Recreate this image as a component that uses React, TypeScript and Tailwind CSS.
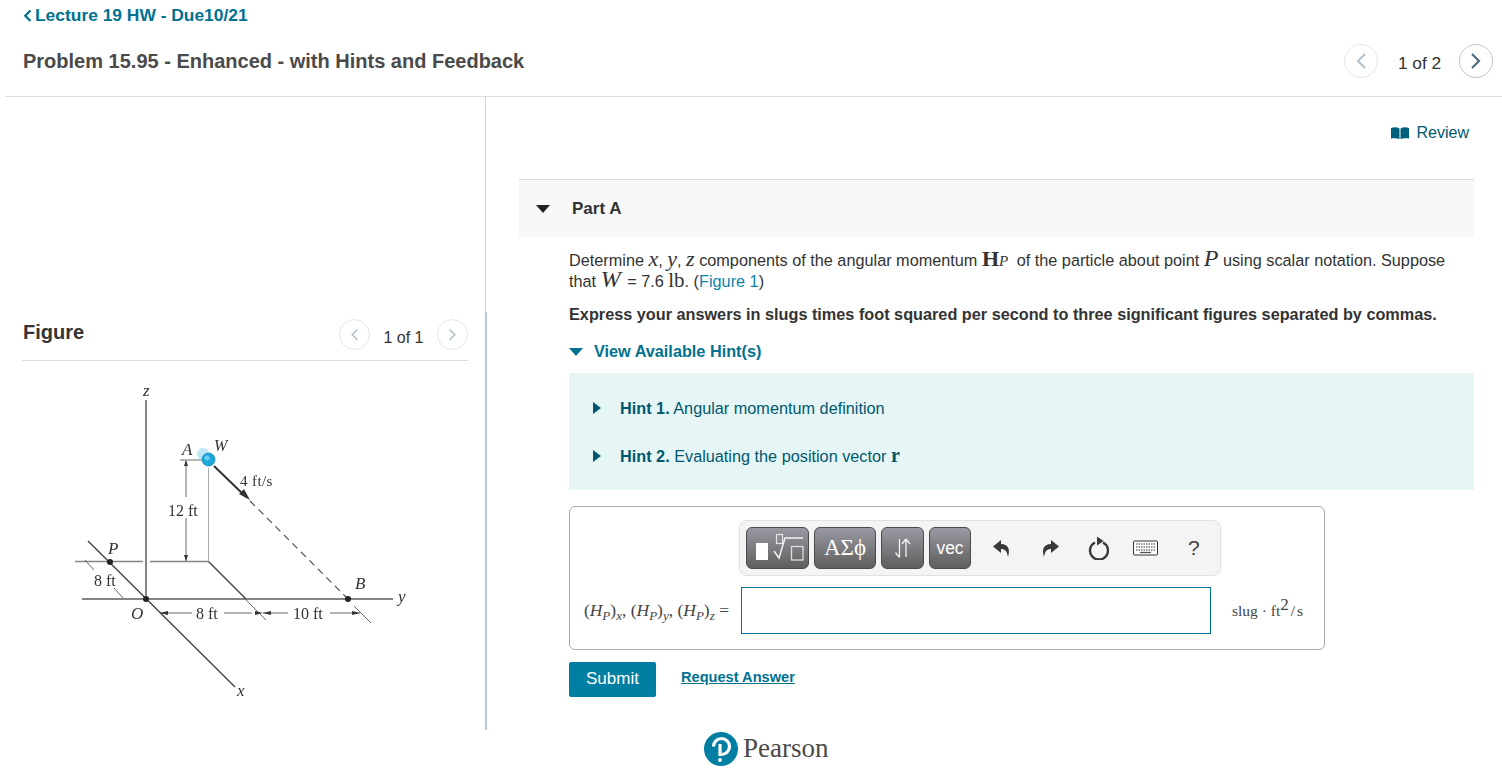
import React from "react";

const M = ({ children }: { children: React.ReactNode }) => (
  <span className="font-['Liberation_Serif',serif] italic text-[22px] leading-[0] text-[#333]">{children}</span>
);
const L = ({ children, cls }: { children: React.ReactNode; cls: string }) => (
  <span className={`font-['Liberation_Serif',serif] leading-[0] text-[#333] ${cls}`}>{children}</span>
);

const Chevron = ({ dir, color, size = 12, w = 2.2 }: { dir: "l" | "r"; color: string; size?: number; w?: number }) => (
  <svg width={size} height={size * 1.5} viewBox="0 0 12 18" fill="none">
    <path d={dir === "l" ? "M10 2 L3 9 L10 16" : "M2 2 L9 9 L2 16"} stroke={color} strokeWidth={w} />
  </svg>
);

const Figure = () => (
  <svg width="485" height="340" viewBox="0 370 485 340" className="block blur-[0.4px]" fontFamily="Liberation Serif, serif" fill="#333">
    <g stroke="#858585" fill="none">
      <path d="M146 400V598" strokeWidth="2" />
      <path d="M82 599H393" strokeWidth="2" />
      <path d="M75 561.5H143M150 561.5H208.5" strokeWidth="1.5" />
      <path d="M208.5 468V561.5" strokeWidth="1" stroke="#aaa" />
    </g>
    <g stroke="#444" fill="none">
      <path d="M88 541L235 687" strokeWidth="1.4" />
      <path d="M208.5 561.5L246 599" strokeWidth="1.4" />
      <path d="M214 466L246 497" strokeWidth="2" stroke="#333" />
      <path d="M250 501L348 599" strokeWidth="1.1" strokeDasharray="7 5" />
      <path d="M180 460H204" strokeWidth="0.8" />
      <path d="M186 461V497M186 518V561" strokeWidth="0.8" />
      <path d="M160 613H192M224 613H252M263 613H288M330 613H360" strokeWidth="0.8" />
      <path d="M246 600L266 620M354 606L371 623" strokeWidth="0.8" />
      <path d="M85 560L94 570M114 588L123 598" strokeWidth="0.8" />
    </g>
    <g fill="#333" stroke="none">
      <path d="M186 460L184 466H188Z" />
      <path d="M186 561L184 555H188Z" />
      <path d="M250 500L239 494L244 489Z" />
      <path d="M160 613L168 611V615Z" />
      <path d="M263 613L255 611V615Z" />
      <path d="M263 613L271 611V615Z" />
      <path d="M360 613L352 611V615Z" />
      <circle cx="146" cy="599" r="3" fill="#222" />
      <circle cx="110" cy="562" r="3" fill="#222" />
      <circle cx="348" cy="599" r="3" fill="#222" />
    </g>
    <circle cx="203" cy="454" r="6" fill="#bfe6f7" />
    <circle cx="208.5" cy="459.5" r="6.5" fill="#1ea7dd" stroke="#1a8cb8" strokeWidth="0.8" />
    <circle cx="207" cy="458" r="2.5" fill="#6fcdf0" />
    <g fontSize="16">
      <text x="143" y="396" fontStyle="italic" fontSize="17">z</text>
      <text x="182" y="455" fontStyle="italic" fontSize="17">A</text>
      <text x="214" y="451" fontStyle="italic" fontSize="16">W</text>
      <text x="240" y="486" fontSize="15" letterSpacing="0.4">4 ft/s</text>
      <text x="168" y="516">12 ft</text>
      <text x="108" y="554" fontStyle="italic" fontSize="17">P</text>
      <text x="94" y="586">8 ft</text>
      <text x="131" y="619" fontStyle="italic" fontSize="17">O</text>
      <text x="196" y="619">8 ft</text>
      <text x="293" y="619">10 ft</text>
      <text x="355" y="589" fontStyle="italic" fontSize="17">B</text>
      <text x="398" y="602" fontStyle="italic" fontSize="17">y</text>
      <text x="237" y="696" fontStyle="italic" fontSize="17">x</text>
    </g>
  </svg>
);

const ToolBtn = ({ w, children }: { w: string; children: React.ReactNode }) => (
  <div className={`${w} h-[42px] flex items-center justify-center rounded-[6px] border border-[#4a4a4a] bg-linear-to-b from-[#9a99a3] to-[#5f5f5f] text-white`}>
    {children}
  </div>
);

const Sub = ({ children }: { children: React.ReactNode }) => (
  <span className="text-[13px] italic leading-[0] align-[-4px]">{children}</span>
);

const Hp = ({ s }: { s: string }) => (
  <span className="whitespace-nowrap">
    (<i>H</i><Sub>P</Sub>)<Sub>{s}</Sub>
  </span>
);

export default function App() {
  return (
    <div className="w-[1502px] h-[776px] overflow-hidden bg-white font-['Liberation_Sans',sans-serif] text-[16.25px] text-[#333]">
      {/* header */}
      <div className="h-[97px] ml-[5px] border-b border-[#dcdcdc] flex flex-col">
        <div className="pl-[18px] h-[31px] flex items-center gap-[3px] text-[#00728f] font-bold text-[17.4px]">
          <Chevron dir="l" color="#00728f" size={9} w={3} />
          <span>Lecture 19 HW - Due10/21</span>
        </div>
        <div className="flex items-center pl-[18px] pr-[9px] mt-[4px] h-[52px]">
          <h1 className="text-[20px] font-bold text-[#4a4a4a] flex-1">Problem 15.95 - Enhanced - with Hints and Feedback</h1>
          <div className="w-[34px] h-[34px] rounded-full border border-[#e6e6e6] flex items-center justify-center">
            <Chevron dir="l" color="#b5c2cc" />
          </div>
          <span className="w-[81px] text-center text-[#333] text-[17.3px] mt-[5px] pl-[2px]">1 of 2</span>
          <div className="w-[34px] h-[34px] rounded-full border border-[#c4c4c4] flex items-center justify-center">
            <Chevron dir="r" color="#4f6d80" />
          </div>
        </div>
      </div>

      <div className="flex">
        {/* left */}
        <div className="w-[487px] shrink-0 flex flex-col">
          <div className="h-[215px] w-[486px] border-r border-[#d4d4d4]" />
          <div className="h-[418px] border-r-2 border-[#b3cbe0]">
            <div className="ml-[22px] w-[446px] h-[49px] border-b border-[#dcdcdc] flex items-center justify-between">
              <span className="text-[20px] font-bold text-[#333] mt-[-8px] ml-[1px]">Figure</span>
              <div className="flex items-center mt-[-3px]">
                <div className="w-[31px] h-[31px] rounded-full border border-[#e6e6e6] flex items-center justify-center">
                  <Chevron dir="l" color="#b5c2cc" size={9} />
                </div>
                <span className="w-[67px] text-center text-[16px] mt-[7px]">1 of 1</span>
                <div className="w-[31px] h-[31px] rounded-full border border-[#e6e6e6] flex items-center justify-center">
                  <Chevron dir="r" color="#b5c2cc" size={9} />
                </div>
              </div>
            </div>
            <div className="mt-[9px]">
              <Figure />
            </div>
          </div>
        </div>

        {/* right */}
        <div className="flex-1 pl-[32px] pr-[28px]">
          <div className="h-[82px] flex justify-end items-start pt-[24px] pr-[5px]">
            <div className="flex items-center gap-[8px] text-[#00586f] text-[16px]">
              <svg width="18" height="12" viewBox="0 0 18 12" fill="#00607a">
                <path d="M0 1C3 0 6 0 8.5 1.5V12C6 11 3 11 0 11.5ZM9.5 1.5C12 0 15 0 18 1V11.5C15 11 12 11 9.5 12Z" />
              </svg>
              <span>Review</span>
            </div>
          </div>
          <div className="h-[58px] bg-[#f8f8f8] border-t border-[#dcdcdc] flex items-center pl-[17px]">
            <svg width="14" height="8" viewBox="0 0 14 8" fill="#222"><path d="M0 0H14L7 8Z" /></svg>
            <span className="ml-[22px] font-bold text-[#333] text-[17px]">Part A</span>
          </div>

          <div className="pl-[50px]">
            <p className="mt-[13px] leading-[21px] text-[#333]">
              Determine <M>x</M>, <M>y</M>, <M>z</M> components of the angular momentum <L cls="font-bold text-[22px]">H</L><L cls="italic text-[15px] mr-[4px]">P</L> of the particle about point <L cls="italic text-[24px]">P</L> using scalar notation. Suppose<br />that <L cls="italic text-[24px] mr-[2px]">W</L> = 7.6 <L cls="text-[21px]">lb</L>. (<span className="text-[#0a84a8]">Figure 1</span>)
            </p>
            <p className="mt-[12px] leading-[21px] font-bold text-[#333]">
              Express your answers in slugs times foot squared per second to three significant figures separated by commas.
            </p>
            <div className="mt-[16px] h-[21px] flex items-center text-[#00728f] font-bold">
              <svg width="14" height="8" viewBox="0 0 14 8" fill="#00728f"><path d="M0 0H14L7 8Z" /></svg>
              <span className="ml-[11px]">View Available Hint(s)</span>
            </div>
            <div className="mt-[11px] h-[117px] bg-[#e6f6f7] pl-[24px] pt-[23px] text-[#00586f]">
              <div className="h-[24px] flex items-center">
                <svg width="8" height="12" viewBox="0 0 8 12" fill="#00586f"><path d="M0 0L8 6L0 12Z" /></svg>
                <span className="ml-[19px]"><b>Hint 1.</b> Angular momentum definition</span>
              </div>
              <div className="mt-[24px] h-[24px] flex items-center">
                <svg width="8" height="12" viewBox="0 0 8 12" fill="#00586f"><path d="M0 0L8 6L0 12Z" /></svg>
                <span className="ml-[19px]"><b>Hint 2.</b> Evaluating the position vector <b className="font-['Liberation_Serif',serif] text-[20px] leading-[0]">r</b></span>
              </div>
            </div>

            {/* answer box */}
            <div className="mt-[16px] w-[756px] h-[144px] border border-[#a9a9a9] rounded-[6px] flex flex-col">
              <div className="ml-[169px] mt-[13px] w-[482px] h-[56px] rounded-[8px] border border-[#e2e2e2] bg-[#f4f4f4] flex items-center pl-[6px]">
                <div className="flex gap-[5px]">
                  <ToolBtn w="w-[63px]">
                    <svg width="61" height="40" viewBox="0 0 61 40" fill="none">
                      <rect x="9" y="15" width="12" height="17" fill="#fff" />
                      <rect x="29.5" y="6.5" width="6" height="9" stroke="#e4e4e4" strokeWidth="1.2" />
                      <path d="M27 23L32 30L38 10H56" stroke="#f2f2f2" strokeWidth="1.5" />
                      <rect x="44.5" y="18.5" width="11.5" height="13.5" stroke="#ddd" strokeWidth="1.3" />
                    </svg>
                  </ToolBtn>
                  <ToolBtn w="w-[62px]"><span className="font-['Liberation_Serif',serif] text-[23px]">ΑΣϕ</span></ToolBtn>
                  <ToolBtn w="w-[43px]">
                    <svg width="20" height="22" viewBox="0 0 20 22" fill="none" stroke="#f2f2f2" strokeWidth="1.3">
                      <path d="M6.5 2V20M2.5 15.5L6.5 20.5M13 2.5V20M13 2L9 7M13 2L17 7" />
                    </svg>
                  </ToolBtn>
                  <ToolBtn w="w-[42px]"><span className="text-[17.5px]">vec</span></ToolBtn>
                </div>
                <div className="flex items-center text-[#3a3a3a]">
                  <svg className="ml-[22px]" width="18" height="19" viewBox="0 0 18 19" fill="#3a3a3a">
                    <path d="M8 1L0 7.5L8 14V10C12 10 14 12 15 18C17.5 10 15 5 8 5Z" />
                  </svg>
                  <svg className="ml-[30px]" width="18" height="19" viewBox="0 0 18 19" fill="#3a3a3a">
                    <path d="M10 1L18 7.5L10 14V10C6 10 4 12 3 18C0.5 10 3 5 10 5Z" />
                  </svg>
                  <svg className="ml-[29px]" width="21" height="24" viewBox="0 0 21 24" fill="none">
                    <path d="M7 6.5A9 9 0 1 0 15 6.5" stroke="#3a3a3a" strokeWidth="2.4" />
                    <path d="M9 0.5L15.5 5L9 9.5Z" fill="#3a3a3a" />
                  </svg>
                  <svg className="ml-[24px]" width="26" height="16" viewBox="0 0 26 16" fill="none">
                    <rect x="0.5" y="1" width="24" height="14" rx="1" stroke="#333" fill="#fff" />
                    <path d="M3 4H22M3 7H22" stroke="#777" strokeWidth="1.5" strokeDasharray="1.5 1" />
                    <path d="M3 10H22" stroke="#777" strokeWidth="1.5" strokeDasharray="1.5 1" />
                    <path d="M7 12.5H18" stroke="#555" strokeWidth="1.3" />
                  </svg>
                  <span className="ml-[29px] text-[21px] text-[#444]">?</span>
                </div>
              </div>
              <div className="flex items-center mt-[11px]">
                <div className="w-[171px] pr-[12px] text-right font-['Liberation_Serif',serif] text-[17.5px] text-[#444] whitespace-nowrap">
                  <Hp s="x" />, <Hp s="y" />, <Hp s="z" /> =
                </div>
                <div className="w-[470px] h-[47px] border border-[#00739a]" />
                <div className="ml-[21px] font-['Liberation_Serif',serif] text-[15.5px] text-[#444] whitespace-nowrap">
                  slug · ft<span className="text-[17px] align-[6px] leading-[0]">2</span><span className="mx-[2px]">/</span>s
                </div>
              </div>
            </div>

            <div className="mt-[12px] flex items-center">
              <div className="w-[87px] h-[35px] rounded-[2px] bg-[#007fa3] text-white flex items-center justify-center text-[17px] pb-[2px]">Submit</div>
              <span className="ml-[25px] mb-[4px] font-bold text-[#00728f] underline text-[14.6px]">Request Answer</span>
            </div>

            <div className="mt-[33px] ml-[135px] flex items-center">
              <svg width="34" height="36" viewBox="0 0 34 36">
                <circle cx="17" cy="18" r="17" fill="#007fa3" />
                <path d="M9.5 15.5A8 8 0 1 1 17.5 23.5" fill="none" stroke="#fff" strokeWidth="3.2" />
                <path d="M16 13V25" stroke="#fff" strokeWidth="3.2" />
                <circle cx="16" cy="29" r="1.9" fill="#fff" />
              </svg>
              <span className="ml-[5px] font-['Liberation_Serif',serif] text-[27px] text-[#4a4a4a] mt-[-2px]">Pearson</span>
            </div>
          </div>
        </div>
      </div>
    </div>
  );
}
